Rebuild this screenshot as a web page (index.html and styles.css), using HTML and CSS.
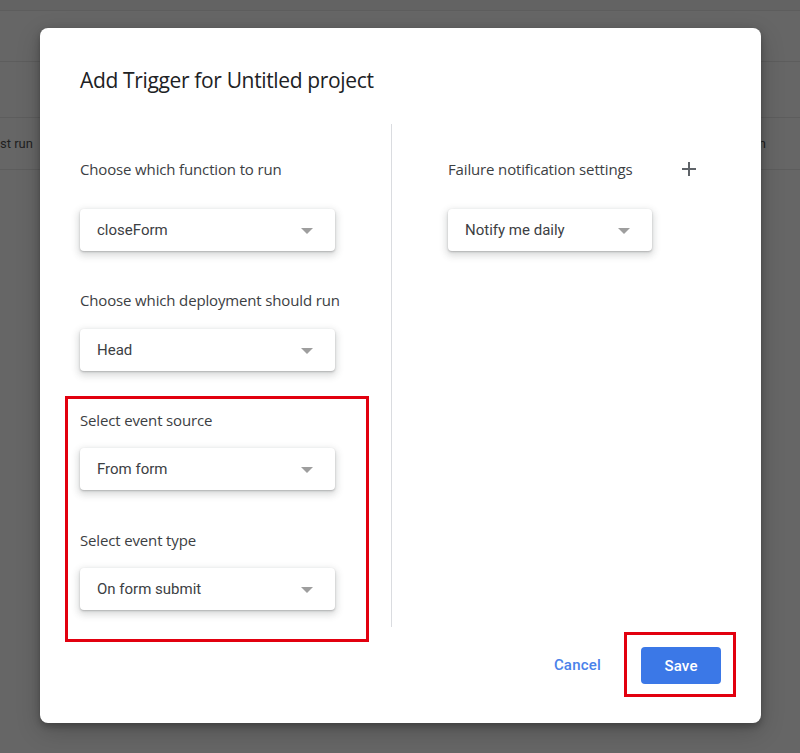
FILE: index.html
```html
<!DOCTYPE html>
<html>
<head>
<meta charset="utf-8">
<link rel="stylesheet" href="styles.css">
</head>
<body>
<div class="page">
  <div class="bg-row r0"></div>
  <div class="bg-row r1"></div>
  <div class="bg-row r2"></div>
  <div class="bg-row r3 head">
    <span class="cell-left">st run</span>
    <span class="cell-right">Execution</span>
  </div>
  <div class="bg-rest"></div>
</div>

<div class="dialog">
  <h1 class="title">Add Trigger for Untitled project</h1>
  <div class="body">
    <div class="col left">
      <div class="label first">Choose which function to run</div>
      <div class="select"><span>closeForm</span><i class="arrow"></i></div>

      <div class="label">Choose which deployment should run</div>
      <div class="select"><span>Head</span><i class="arrow"></i></div>

      <div class="highlight">
        <div class="label inbox">Select event source</div>
        <div class="select"><span>From form</span><i class="arrow"></i></div>
        <div class="label">Select event type</div>
        <div class="select"><span>On form submit</span><i class="arrow"></i></div>
      </div>
    </div>
    <div class="divider"></div>
    <div class="col right">
      <div class="label first header">
        <span>Failure notification settings</span>
        <svg class="plus" width="14" height="14" viewBox="0 0 14 14"><path d="M7 0v14M0 7h14" stroke="#5f6368" stroke-width="2"/></svg>
      </div>
      <div class="select small"><span>Notify me daily</span><i class="arrow"></i></div>
    </div>
  </div>
  <div class="footer">
    <button class="cancel">Cancel</button>
    <div class="save-wrap"><button class="save">Save</button></div>
  </div>
</div>
</body>
</html>
```
FILE: styles.css
```css
html, body {
  margin: 0;
  padding: 0;
}
body {
  width: 800px;
  height: 753px;
  overflow: hidden;
  background: #666666;
  font-family: Roboto, "Liberation Sans", sans-serif;
}
.page {
  display: flex;
  flex-direction: column;
  height: 753px;
}
.bg-row {
  border-bottom: 1px solid #5d5d5d;
  box-sizing: border-box;
  flex-shrink: 0;
}
.r0 { height: 11px; background: #636363; }
.r1 { height: 51px; }
.r2 { height: 56px; }
.r3 { height: 52px; }
.head {
  display: flex;
  justify-content: space-between;
  align-items: center;
  font-size: 13px;
  color: #1f1f1f;
}
.cell-left { margin-left: 0; }
.cell-right { margin-right: 34px; }
.bg-rest { flex: 1; }

.dialog {
  position: absolute;
  left: 40px;
  top: 28px;
  width: 721px;
  height: 695px;
  background: #fff;
  border-radius: 8px;
  box-shadow: 0 4px 5px rgba(0,0,0,0.14), 0 2px 10px rgba(0,0,0,0.12), 0 8px 24px rgba(0,0,0,0.2);
  box-sizing: border-box;
  padding: 38px 0 0 40px;
  display: flex;
  flex-direction: column;
}
.title {
  margin: 0;
  font-family: "Open Sans", Roboto, sans-serif;
  font-weight: 400;
  font-size: 21px;
  line-height: 28px;
  height: 28px;
  color: #202124;
  letter-spacing: -0.35px;
  flex-shrink: 0;
}
.body {
  margin-top: 30px;
  height: 503px;
  display: flex;
  flex-shrink: 0;
}
.col {
  display: flex;
  flex-direction: column;
  align-items: flex-start;
}
.col > *, .highlight > * { flex-shrink: 0; }
.col.left { width: 311px; }
.col.right { padding-left: 56px; }
.divider {
  width: 1px;
  background: #dadce0;
  height: 503px;
}
.label {
  font-family: "Open Sans", Roboto, sans-serif;
  font-size: 15px;
  line-height: 24px;
  height: 24px;
  color: #3c4043;
  margin-top: 37px;
  margin-bottom: 17px;
  letter-spacing: -0.15px;
}
.label.first {
  margin-top: 21px;
  height: 48px;
  line-height: 48px;
  margin-bottom: 16px;
}
.label.inbox {
  margin-top: 9px;
  margin-bottom: 16px;
}
.header {
  display: flex;
  align-items: center;
  width: 248px;
  justify-content: space-between;
}
.plus { display: block; }

.select {
  width: 255px;
  height: 42px;
  box-sizing: border-box;
  border-radius: 4px;
  background: #fff;
  box-shadow: 0 1px 2px rgba(60,64,67,0.3), 0 3px 7px 2px rgba(60,64,67,0.18);
  display: flex;
  align-items: center;
  justify-content: space-between;
  padding: 0 22px 0 17px;
  font-size: 15px;
  color: #3c4043;
}
.select.small { width: 204px; }
.arrow {
  width: 0;
  height: 0;
  border-left: 6px solid transparent;
  border-right: 6px solid transparent;
  border-top: 6px solid #9e9e9e;
  margin-top: 2px;
}
.highlight {
  margin-top: 25px;
  margin-left: -15px;
  width: 304px;
  box-sizing: border-box;
  border: 3px solid #e2000f;
  padding: 0 0 29px 12px;
  display: flex;
  flex-direction: column;
  align-items: flex-start;
}
.highlight .label:not(.inbox) {
  margin-top: 38px;
  margin-bottom: 16px;
}

.footer {
  margin-top: 5px;
  display: flex;
  justify-content: flex-end;
  align-items: center;
  padding-right: 25px;
  flex-shrink: 0;
}
.cancel {
  border: 0;
  background: none;
  font-family: Roboto, sans-serif;
  font-weight: 500;
  font-size: 15px;
  color: #4a82ea;
  padding: 0;
  margin-right: 23px;
  letter-spacing: 0.2px;
}
.save-wrap {
  border: 3px solid #e2000f;
  padding: 12px 12px 10px 14px;
  width: 112px;
  height: 65px;
  box-sizing: border-box;
}
.save {
  width: 80px;
  height: 37px;
  border: 0;
  border-radius: 4px;
  background: #3b78e7;
  color: #fff;
  font-family: Roboto, sans-serif;
  font-weight: 500;
  font-size: 15px;
  letter-spacing: 0.2px;
  padding: 0;
}
```
